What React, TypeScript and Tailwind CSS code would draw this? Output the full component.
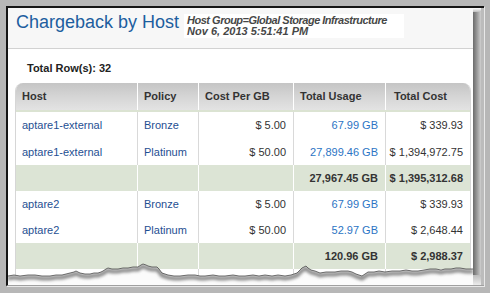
import React from 'react';

type Row = {
  host?: string;
  policy?: string;
  cpg?: string;
  usage: string;
  cost: string;
  total?: boolean;
};

const rows: Row[] = [
  { host: 'aptare1-external', policy: 'Bronze', cpg: '$ 5.00', usage: '67.99 GB', cost: '$ 339.93' },
  { host: 'aptare1-external', policy: 'Platinum', cpg: '$ 50.00', usage: '27,899.46 GB', cost: '$ 1,394,972.75' },
  { total: true, usage: '27,967.45 GB', cost: '$ 1,395,312.68' },
  { host: 'aptare2', policy: 'Bronze', cpg: '$ 5.00', usage: '67.99 GB', cost: '$ 339.93' },
  { host: 'aptare2', policy: 'Platinum', cpg: '$ 50.00', usage: '52.97 GB', cost: '$ 2,648.44' },
  { total: true, usage: '120.96 GB', cost: '$ 2,988.37' },
];

// torn paper edge, local coords of the svg (x - 8, y - 259)
const tear =
  '0,17 6,16 12,17 20,16 27,16 34,17 42,17 48,16 54,16 58,15 62,14 66,13 68,12 70,13 72,14 77,15 82,15 86,14 90,14 93,13 95,12 98,10 100,9 104,10 110,10 115,9 120,9 125,8 130,8 133,6 135,5 138,6 140,7 144,8 149,8 151,10 154,14 157,15 160,16 166,17 172,17 180,16 187,16 192,17 197,17 205,16 211,17 217,17 225,16 231,17 237,17 245,16 251,17 257,16 264,17 270,16 277,17 283,16 286,15 289,14 292,11 294,9 296,8 298,7 300,9 303,11 307,12 312,14 318,13 327,13 333,12 340,12 344,13 348,15 351,16 354,17 357,15 360,13 366,13 371,12 377,13 384,12 392,12 398,11 404,12 410,12 416,11 422,10 428,10 433,11 437,10 443,10 448,9 452,9 458,10 465,10';

const TornEdge = () => (
  <svg className="absolute left-0 bottom-0" width="465" height="26" viewBox="0 0 465 26">
    <defs>
      <clipPath id="below">
        <polygon points={`${tear} 465,26 0,26`} />
      </clipPath>
      <filter id="blur" x="-5%" y="-50%" width="110%" height="200%">
        <feGaussianBlur stdDeviation="1.5" />
      </filter>
    </defs>
    <polygon points={`${tear} 465,26 0,26`} fill="#fbfbfb" />
    <g clipPath="url(#below)">
      <polyline points={tear} transform="translate(0,2.5)" fill="none" stroke="#8c8c8c" strokeWidth="4" filter="url(#blur)" />
    </g>
    <polyline points={tear} fill="none" stroke="#333" strokeWidth="0.7" />
  </svg>
);

const cellBase = 'h-full flex items-center text-[11px]';

export default function App() {
  return (
    <div
      className="w-[490px] h-[293px] bg-[#b7b7b7] pt-[6px] pl-[6px] overflow-hidden"
      style={{ fontFamily: '"Liberation Sans", Arial, sans-serif' }}
    >
      <div className="w-[478px] h-[280px] border-l-2 border-t-2 border-b border-l-[#151515] border-t-[#151515] border-b-[#a0a0a0] bg-white flex shadow-[1px_1px_0_#e8e8e8]">
        {/* paper */}
        <div className="relative w-[465px] h-full overflow-hidden bg-white">
          {/* title bar */}
          <div className="h-[41px] bg-[#f7f7f7] border-b border-[#d2d2d2] flex items-start pl-[8px]">
            <div className="mt-[2px] text-[18px] leading-[24px] text-[#1d5e9f]">Chargeback by Host</div>
            <div className="ml-[5px] mt-[6px] w-[220px] h-[24px] bg-white pl-[3px] pt-[1px] text-[11px] leading-[11px] font-bold italic text-[#474747] whitespace-nowrap">
              <div className="tracking-[-0.5px]">Host Group=Global Storage Infrastructure</div>
              <div>Nov 6, 2013 5:51:41 PM</div>
            </div>
          </div>

          <div className="mt-[12px] ml-[19px] text-[11px] leading-[14px] font-bold text-[#222]">Total Row(s): 32</div>

          {/* table */}
          <div className="mt-[8px] ml-[7px] w-[456px] rounded-t-[8px] overflow-hidden border-l border-r border-[#d6d6d6]">
            <div className="h-[29px] flex bg-gradient-to-b from-[#c5c5c5] via-[#d5d5d5] to-[#e3e3e3] border-b-2 border-[#dbe3d2] font-bold text-[#333]">
              <div className={`${cellBase} w-[122px] pl-[6px] border-r border-white`}>Host</div>
              <div className={`${cellBase} w-[61px] pl-[6px] border-r border-white`}>Policy</div>
              <div className={`${cellBase} w-[95px] pl-[6px] border-r border-white`}>Cost Per GB</div>
              <div className={`${cellBase} w-[92px] pl-[6px] border-r border-white`}>Total Usage</div>
              <div className={`${cellBase} flex-1 pl-[8px]`}>Total Cost</div>
            </div>
            {rows.map((r, i) => {
              const sep = r.total ? 'border-white' : 'border-[#d9d9d9]';
              return (
                <div
                  key={i}
                  className={`flex ${i === 0 ? 'h-[27px]' : 'h-[26px]'} ${r.total ? 'bg-[#dce4d5] font-bold text-[#333]' : 'bg-white'}`}
                >
                  <div className={`${cellBase} w-[122px] pl-[6px] border-r ${sep} text-[#1f4f92]`}>{r.host}</div>
                  <div className={`${cellBase} w-[61px] pl-[6px] border-r ${sep} text-[#1f4f92]`}>{r.policy}</div>
                  <div className={`${cellBase} w-[95px] pr-[7px] justify-end border-r ${sep} text-[#333]`}>{r.cpg}</div>
                  <div className={`${cellBase} w-[92px] pr-[7px] justify-end border-r ${sep} ${r.total ? 'text-[#333]' : 'text-[#2b74c4]'}`}>{r.usage}</div>
                  <div className={`${cellBase} flex-1 pr-[7px] justify-end text-[#333]`}>{r.cost}</div>
                </div>
              );
            })}
            <div className="flex h-[26px] bg-white">
              <div className="w-[122px] border-r border-[#d9d9d9]" />
              <div className="w-[61px] border-r border-[#d9d9d9]" />
              <div className="w-[95px] border-r border-[#d9d9d9]" />
              <div className="w-[92px] border-r border-[#d9d9d9]" />
              <div className="flex-1" />
            </div>
          </div>

          <TornEdge />
        </div>

        {/* right drop shadow */}
        <div className="w-[11px] h-full flex">
          <div className="w-[8px] h-full flex flex-col">
            <div className="h-[4px] bg-gradient-to-b from-white to-[#bdbdbd]" />
            <div className="flex-1 bg-gradient-to-r from-[#6b6b6b] via-[#9a9a9a] to-[#cfcfcf]" />
            <div className="h-[10px] bg-gradient-to-b from-[#bdbdbd] to-[#ececec]" />
          </div>
          <div className="w-[3px] h-full bg-[#bcbcbc]" />
        </div>
      </div>
    </div>
  );
}
